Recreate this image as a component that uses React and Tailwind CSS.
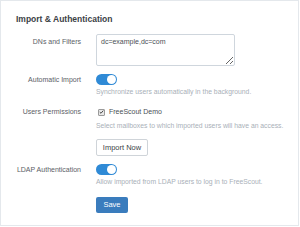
export default function App() {
  return (
    <div className="w-[299px] h-[226px] border border-[#e4e8ec] bg-white font-['Liberation_Sans',Arial,sans-serif] text-[7px] leading-[10px]">
      <h2 className="ml-[15px] mt-[12px] text-[8.5px] leading-[12px] font-bold text-[#3b4146]">
        Import &amp; Authentication
      </h2>

      <div className="flex mt-[9px]">
        <div className="w-[80px] pt-[3px] text-right text-[#5b6066]">DNs and Filters</div>
        <textarea
          className="ml-[15px] w-[139px] h-[32px] px-[4px] py-[2px] border border-[#cfd6dd] rounded-[2px] text-[#4a4f55] text-[7px] leading-[10px] outline-none"
          defaultValue="dc=example,dc=com"
        />
      </div>

      <div className="flex mt-[8px]">
        <div className="w-[80px] pt-[1px] text-right text-[#5b6066]">Automatic Import</div>
        <div className="ml-[15px]">
          <Toggle />
          <p className="mt-[2px] text-[6.8px] text-[#a9b0b8]">Synchronize users automatically in the background.</p>
        </div>
      </div>

      <div className="flex mt-[10px]">
        <div className="w-[80px] text-right text-[#5b6066]">Users Permissions</div>
        <div className="ml-[15px]">
          <div className="flex items-center h-[10px]">
            <span className="ml-[2px] w-[7px] h-[7px] rounded-[1px] bg-[#e8e8e8] border border-[#9a9a9a] flex items-center justify-center">
              <svg viewBox="0 0 8 8" className="w-[6px] h-[6px]">
                <path d="M1.2 4.2 L3.2 6 L6.8 1.8" fill="none" stroke="#333" strokeWidth="1.4" />
              </svg>
            </span>
            <span className="ml-[4px] text-[#4a4f55]">FreeScout Demo</span>
          </div>
          <p className="mt-[4px] text-[6.8px] text-[#a9b0b8]">Select mailboxes to which imported users will have an access.</p>
          <button className="mt-[8px] w-[52px] h-[17px] border border-[#cfd4d9] rounded-[2px] bg-white text-[#3b4146] text-[7.5px]">
            Import Now
          </button>
        </div>
      </div>

      <div className="flex mt-[8px]">
        <div className="w-[80px] pt-[1px] text-right text-[#5b6066]">LDAP Authentication</div>
        <div className="ml-[15px]">
          <Toggle />
          <p className="mt-[2px] text-[6.8px] text-[#a9b0b8]">Allow imported from LDAP users to log in to FreeScout.</p>
          <button className="mt-[10px] w-[32px] h-[16px] rounded-[2px] bg-[#3a7cbd] text-white text-[7.5px]">
            Save
          </button>
        </div>
      </div>
    </div>
  );
}

function Toggle() {
  return (
    <div className="w-[21px] h-[11px] rounded-full bg-[#2f8ad6] flex items-center justify-end pr-[1px]">
      <div className="w-[9px] h-[9px] rounded-full bg-white" />
    </div>
  );
}
